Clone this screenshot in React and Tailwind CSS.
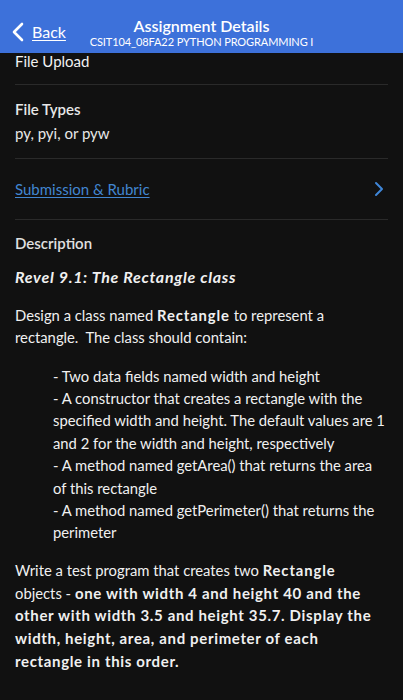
import React from 'react';

const Divider = () => <div className="h-px bg-[#2a2a2a] ml-[15px] mr-[15px]" />;

const B = ({ children }) => <b className="font-bold tracking-[0.9px]">{children}</b>;

const App = () => {
  return (
    <div className="w-[403px] h-[700px] overflow-hidden bg-[#111111] text-white font-['Lato','Noto_Sans',sans-serif]">
      {/* Header */}
      <div className="h-[53px] bg-[#3d71da] relative flex flex-col items-center justify-center">
        <div className="absolute left-[11px] top-[22px] flex items-center gap-[7px]">
          <svg width="14" height="20" viewBox="0 0 14 20" fill="none">
            <path d="M11 2 L3 10 L11 18" stroke="white" strokeWidth="2.6" strokeLinecap="round" strokeLinejoin="round" />
          </svg>
          <span className="text-[16px] leading-[20px] underline underline-offset-2">Back</span>
        </div>
        <div className="text-[16px] leading-[18px] font-semibold mt-[12px]">Assignment Details</div>
        <div className="text-[11px] leading-[14px] tracking-[-0.1px]">CSIT104_08FA22 PYTHON PROGRAMMING I</div>
      </div>

      {/* File upload */}
      <div className="px-[15px] -mt-[2px] pb-[13px] text-[15px] leading-[20px] text-[#f2f2f2]">File Upload</div>
      <Divider />

      <div className="px-[15px] pt-[14px] pb-[15px]">
        <div className="text-[15px] leading-[20px] font-semibold text-[#e8e8e8]">File Types</div>
        <div className="text-[15px] leading-[20px] mt-[4px] text-[#e8e8e8]">py, pyi, or pyw</div>
      </div>
      <Divider />

      <div className="px-[15px] h-[60px] flex items-center justify-between">
        <span className="text-[15px] text-[#4286d0] underline underline-offset-2">Submission &amp; Rubric</span>
        <svg width="10" height="16" viewBox="0 0 10 16" fill="none" className="mr-[4px]">
          <path d="M2 2 L8 8 L2 14" stroke="#3f86d8" strokeWidth="2" strokeLinecap="round" strokeLinejoin="round" />
        </svg>
      </div>
      <Divider />

      {/* Description */}
      <div className="px-[15px] pt-[12px] text-[14.8px] leading-[22.4px] text-[#f0f0f0]">
        <div className="font-semibold text-[15px] text-[#e0e0e0]">Description</div>
        <div className="mt-[12px] font-bold italic text-[16px] tracking-[0.7px]">Revel 9.1: The Rectangle class</div>
        <p className="mt-[15px]">
          Design a class named <B>Rectangle</B> to represent a rectangle.&nbsp; The class should contain:
        </p>
        <div className="mt-[16px] pl-[38px]">
          <div>- Two data fields named width and height</div>
          <div>- A constructor that creates a rectangle with the specified width and height. The default values are 1 and 2 for the width and height, respectively</div>
          <div>- A method named getArea() that returns the area of this rectangle</div>
          <div>- A method named getPerimeter() that returns the perimeter</div>
        </div>
        <p className="mt-[15px] pr-[8px] leading-[22.7px]">
          Write a test program that creates two <B>Rectangle</B> objects -{' '}
          <b className="font-bold text-[15px] tracking-[0.65px]">
            one with width 4 and height 40 and the other with width 3.5 and height 35.7. Display the width, height, area, and perimeter of each rectangle in this order.
          </b>
        </p>
      </div>
    </div>
  );
};

export default App;
